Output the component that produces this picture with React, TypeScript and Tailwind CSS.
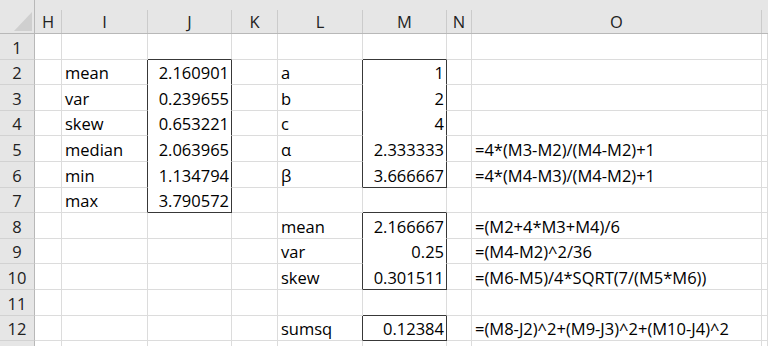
import React from "react";

type Cell = { t: string; r?: boolean };
const COLS = ["H", "I", "J", "K", "L", "M", "N", "O", ""];

const DATA: Record<number, Record<string, Cell>> = {
  2: { I: { t: "mean" }, J: { t: "2.160901", r: true }, L: { t: "a" }, M: { t: "1", r: true } },
  3: { I: { t: "var" }, J: { t: "0.239655", r: true }, L: { t: "b" }, M: { t: "2", r: true } },
  4: { I: { t: "skew" }, J: { t: "0.653221", r: true }, L: { t: "c" }, M: { t: "4", r: true } },
  5: {
    I: { t: "median" },
    J: { t: "2.063965", r: true },
    L: { t: "α" },
    M: { t: "2.333333", r: true },
    O: { t: "=4*(M3-M2)/(M4-M2)+1" },
  },
  6: {
    I: { t: "min" },
    J: { t: "1.134794", r: true },
    L: { t: "β" },
    M: { t: "3.666667", r: true },
    O: { t: "=4*(M4-M3)/(M4-M2)+1" },
  },
  7: { I: { t: "max" }, J: { t: "3.790572", r: true } },
  8: { L: { t: "mean" }, M: { t: "2.166667", r: true }, O: { t: "=(M2+4*M3+M4)/6" } },
  9: { L: { t: "var" }, M: { t: "0.25", r: true }, O: { t: "=(M4-M2)^2/36" } },
  10: { L: { t: "skew" }, M: { t: "0.301511", r: true }, O: { t: "=(M6-M5)/4*SQRT(7/(M5*M6))" } },
  12: { L: { t: "sumsq" }, M: { t: "0.12384", r: true }, O: { t: "=(M8-J2)^2+(M9-J3)^2+(M10-J4)^2" } },
};

// box id per cell; 0 = none
function boxOf(col: string, row: number): number {
  if (col === "J" && row >= 2 && row <= 7) return 1;
  if (col === "M" && row >= 2 && row <= 6) return 2;
  if (col === "M" && row >= 8 && row <= 10) return 3;
  if (col === "M" && row === 12) return 4;
  return 0;
}

function rightClass(ci: number, row: number): string {
  const col = COLS[ci];
  const next = COLS[ci + 1];
  if (boxOf(col, row) || (next !== undefined && boxOf(next, row))) return "border-r-[#383838]";
  return "border-r-[#dcdcdc]";
}

function bottomClass(col: string, row: number): string {
  const b = boxOf(col, row);
  const below = boxOf(col, row + 1);
  if (b) {
    if (below === b) return "border-b-white";
    return "border-b-[#383838]";
  }
  if (below) return "border-b-[#383838]";
  return "border-b-[#dcdcdc]";
}

export default function App() {
  const rows = Array.from({ length: 13 }, (_, i) => i + 1);
  return (
    <div className="w-[768px] h-[346px] overflow-hidden bg-white font-['Open_Sans',sans-serif] text-[16.5px] text-black">
      <div className="grid grid-cols-[35px_27px_86px_84px_46px_85px_84px_25px_290px_6px] grid-rows-[34px_repeat(12,25.6px)_20px]">
        {/* corner */}
        <div className="bg-[#e6e6e6] border-r border-b border-r-[#b8b8b8] border-b-[#b8b8b8] flex items-start">
          <svg width="34" height="33" viewBox="0 0 34 33" className="block">
            <polygon points="32,12 32,31 14,31" fill="#cfcfcf" />
          </svg>
        </div>
        {COLS.map((c, i) => (
          <div key={"h" + i} className="bg-[#e6e6e6] border-b border-b-[#b8b8b8] flex flex-col">
            <div className="h-[10px]" />
            <div
              className={
                i === COLS.length - 1
                  ? "h-[23px] flex items-end justify-center leading-[22px] text-[#222]"
                  : "h-[23px] border-r border-r-[#cbcbcb] flex items-end justify-center leading-[22px] text-[#222]"
              }
            >
              {c}
            </div>
          </div>
        ))}
        {rows.map((r) => (
          <React.Fragment key={r}>
            <div className="bg-[#e6e6e6] border-r border-b border-r-[#b8b8b8] border-b-[#d2d2d2] flex items-end justify-center leading-[22px] text-[#222]">
              {r <= 12 ? r : ""}
            </div>
            {COLS.map((c, ci) => {
              const cell = DATA[r]?.[c];
              const cls =
                "border-r border-b flex items-end leading-[22px] whitespace-nowrap overflow-visible " +
                rightClass(ci, r) +
                " " +
                bottomClass(c, r) +
                (cell?.r ? " justify-end pr-[2px]" : " justify-start pl-[3px]");
              return (
                <div key={c + ci} className={cls}>
                  {cell ? cell.t : ""}
                </div>
              );
            })}
          </React.Fragment>
        ))}
      </div>
    </div>
  );
}
